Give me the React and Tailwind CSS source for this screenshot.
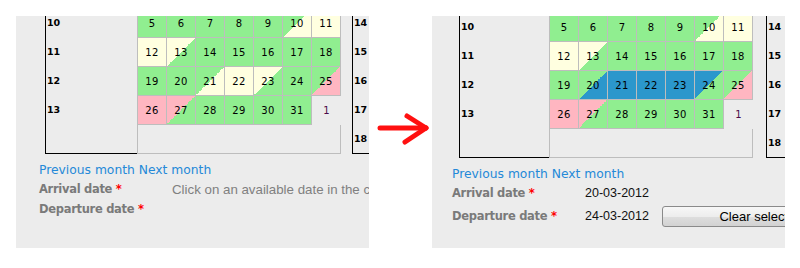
const fills = {
  g: 'bg-[#90ee90]',
  y: 'bg-[#ffffe0]',
  p: 'bg-[#ffb6c1]',
  b: 'bg-[#2b97cc]',
  gy: 'bg-[linear-gradient(to_bottom_right,#90ee90_50%,#ffffe0_50%)]',
  yg: 'bg-[linear-gradient(to_bottom_right,#ffffe0_50%,#90ee90_50%)]',
  gp: 'bg-[linear-gradient(to_bottom_right,#90ee90_50%,#ffb6c1_50%)]',
  pg: 'bg-[linear-gradient(to_bottom_right,#ffb6c1_50%,#90ee90_50%)]',
  gb: 'bg-[linear-gradient(to_bottom_right,#90ee90_50%,#2b97cc_50%)]',
  bg: 'bg-[linear-gradient(to_bottom_right,#2b97cc_50%,#90ee90_50%)]',
}

const week1 = [[5, 'g'], [6, 'g'], [7, 'g'], [8, 'g'], [9, 'g'], [10, 'gy'], [11, 'y']]
const week2 = [[12, 'y'], [13, 'yg'], [14, 'g'], [15, 'g'], [16, 'g'], [17, 'g'], [18, 'g']]
const week4 = [[26, 'p'], [27, 'pg'], [28, 'g'], [29, 'g'], [30, 'g'], [31, 'g'], [1, null]]

const before = [
  week1,
  week2,
  [[19, 'g'], [20, 'g'], [21, 'gy'], [22, 'y'], [23, 'yg'], [24, 'g'], [25, 'gp']],
  week4,
]

const after = [
  week1,
  week2,
  [[19, 'g'], [20, 'gb'], [21, 'b'], [22, 'b'], [23, 'b'], [24, 'bg'], [25, 'gp']],
  week4,
]

function WeekCol({ labels, className }) {
  return (
    <div className={`flex flex-col border-l border-b border-black shrink-0 ${className}`}>
      {labels.map((l, i) => (
        <div key={i} className={`${i === 4 ? 'h-[28px]' : 'h-[29px]'} flex items-center pl-px text-[9.5px] font-bold text-black font-['DejaVu_Sans',sans-serif]`}>
          {l}
        </div>
      ))}
    </div>
  )
}

function Month({ rows }) {
  return (
    <div className="flex flex-col border-l border-[#bdbdbd] shrink-0 font-['DejaVu_Sans',sans-serif] text-[10px] tracking-[0.3px]">
      {rows.map((row, r) => (
        <div key={r} className="flex">
          {row.map(([day, fill]) => (
            fill ? (
              <div key={day} className={`w-[29px] h-[29px] flex items-center justify-center border-r border-b border-[#bdbdbd] text-black ${fills[fill]}`}>
                {day}
              </div>
            ) : (
              <div key={day} className="w-[29px] h-[29px] flex items-center justify-center text-[#4a0a4a]">
                {day}
              </div>
            )
          ))}
        </div>
      ))}
      <div className="w-[203px] h-[29px] border-r border-b border-[#bdbdbd]" />
    </div>
  )
}

function Label({ children }) {
  return (
    <div className="w-[133px] shrink-0 font-bold text-[11.5px] tracking-[-0.3px] text-[#7a7a7a] font-['DejaVu_Sans',sans-serif]">
      {children} <span className="text-[#ff0000]">*</span>
    </div>
  )
}

function Links() {
  return (
    <div className="h-[20px] flex items-center text-[12.3px] text-[#2489d8] font-['DejaVu_Sans',sans-serif]">
      <a>Previous month</a>&nbsp;<a>Next month</a>
    </div>
  )
}

export default function App() {
  return (
    <div className="w-[800px] h-[268px] bg-white flex pt-[16px] pl-[16px]">
      {/* before */}
      <div className="w-[353px] h-[232px] bg-[#ececec] overflow-hidden shrink-0">
        <div className="flex mt-[-7px] pl-[29px]">
          <WeekCol labels={['10', '11', '12', '13', '']} className="w-[92px]" />
          <Month rows={before} />
          <WeekCol labels={['14', '15', '16', '17', '18']} className="ml-[11px] w-[40px]" />
        </div>
        <div className="pl-[23px] mt-[6px]">
          <Links />
          <div className="h-[20px] flex items-center">
            <Label>Arrival date</Label>
            <span className="whitespace-nowrap text-[13.3px] text-[#808080] font-['Liberation_Sans',sans-serif]">
              Click on an available date in the calendar
            </span>
          </div>
          <div className="h-[19px] flex items-center">
            <Label>Departure date</Label>
          </div>
        </div>
      </div>

      <div className="w-[63px] h-[232px] shrink-0">
        <svg width="63" height="232" viewBox="0 0 63 232">
          <g stroke="#ff1010" strokeWidth="5" strokeLinecap="round" fill="none">
            <line x1="11" y1="112" x2="56" y2="112" />
            <line x1="38" y1="100" x2="57" y2="112" />
            <line x1="36" y1="126" x2="57" y2="112" />
          </g>
        </svg>
      </div>

      {/* after */}
      <div className="w-[353px] h-[232px] bg-[#ececec] overflow-hidden shrink-0">
        <div className="flex mt-[-3px] pl-[27px]">
          <WeekCol labels={['10', '11', '12', '13', '']} className="w-[90px]" />
          <Month rows={after} />
          <WeekCol labels={['14', '15', '16', '17', '18']} className="ml-[13px] w-[40px]" />
        </div>
        <div className="pl-[20px] mt-[6px]">
          <Links />
          <div className="h-[19px] flex items-center">
            <Label>Arrival date</Label>
            <span className="text-[12.5px] text-[#111] font-['Liberation_Sans',sans-serif]">20-03-2012</span>
          </div>
          <div className="mt-[3px] h-[21px] flex items-center whitespace-nowrap">
            <Label>Departure date</Label>
            <span className="text-[12.5px] text-[#111] font-['Liberation_Sans',sans-serif]">24-03-2012</span>
            <button className="ml-[13px] shrink-0 w-[201px] h-[21px] border border-[#8a8a8a] rounded-[3px] bg-[linear-gradient(#f7f7f7,#ededed_50%,#dedede_50%,#d2d2d2)] text-[13px] text-black font-['Liberation_Sans',sans-serif] leading-none">
              Clear selection
            </button>
          </div>
        </div>
      </div>
    </div>
  )
}
